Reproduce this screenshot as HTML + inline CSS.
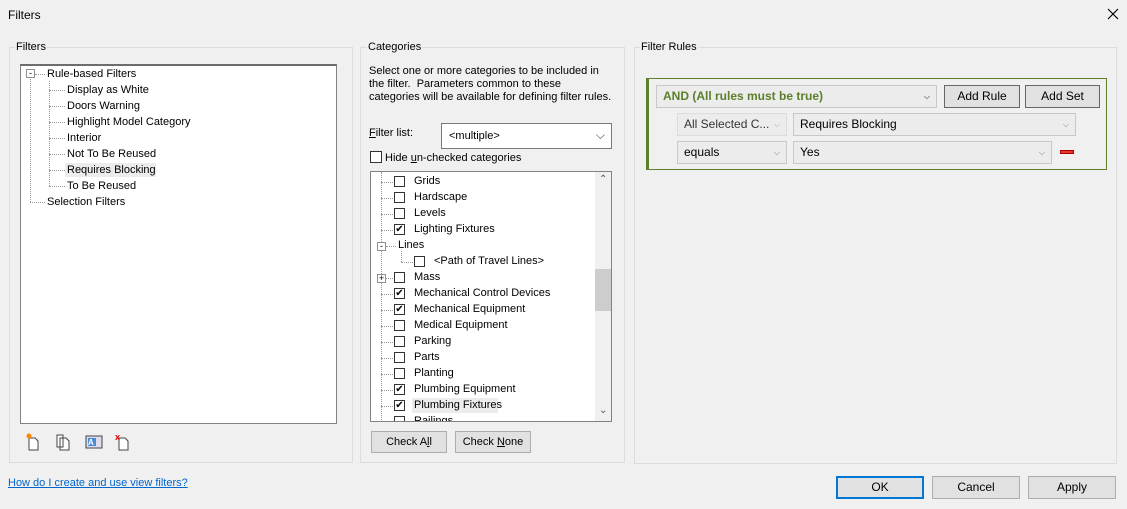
<!DOCTYPE html>
<html><head><style>
*{box-sizing:border-box;margin:0;padding:0}
body{width:1127px;height:509px;background:#f0f0f0;font-family:"Liberation Sans",sans-serif;font-size:11px;color:#000;position:relative;overflow:hidden}
.a{position:absolute;white-space:nowrap}
.grp{position:absolute;border:1px solid #dcdcdc}
.lg{position:absolute;background:#f0f0f0;padding:0 1px}
.btn{position:absolute;background:#e1e1e1;border:1px solid #adadad;text-align:center}
.cb{position:absolute;width:11px;height:11px;border:1px solid #333;background:#fff;font-size:10px;line-height:9px;text-align:center}
.dotv{position:absolute;border-left:1px dotted #999}
.doth{position:absolute;border-top:1px dotted #999}
.combo{position:absolute;border:1px solid #c8c8c8;background:#ececec;padding-left:6px}
.car{position:absolute;right:6px;top:0;color:#777;font-size:8px}
</style></head><body>
<div class="a" style="left:8px;top:8px;font-size:12px">Filters</div>
<svg class="a" style="left:1107px;top:8px" width="12" height="12"><path d="M1 1L11 11M11 1L1 11" stroke="#000" stroke-width="1.2"/></svg>

<!-- Filters group -->
<div class="grp" style="left:9px;top:47px;width:344px;height:416px"></div>
<div class="lg" style="left:15px;top:41px">Filters</div>
<div class="a" style="left:20px;top:64px;width:317px;height:360px;background:#fff;border:1px solid #828282;border-top:2px solid #6d6d6d"></div>
<div class="a" style="left:26px;top:69px;width:9px;height:9px;border:1px solid #919191;background:#fff;font-size:9px;line-height:6px;text-align:center">-</div>
<div class="doth" style="left:35px;top:74px;width:10px"></div>
<div class="dotv" style="left:30px;top:79px;height:123px"></div>
<div class="doth" style="left:30px;top:202px;width:15px"></div>
<div class="dotv" style="left:49px;top:81px;height:105px"></div>
<div class="a" style="left:47px;top:68px">Rule-based Filters</div>
<div class="a" style="left:47px;top:196px">Selection Filters</div>
<div class="a" style="left:65px;top:163px;width:91px;height:14px;background:#ececec"></div>
<div style="position:absolute;left:49px;top:84px">
<div class="doth" style="left:0;top:6px;width:16px"></div><div class="a" style="left:18px;top:0">Display as White</div>
<div class="doth" style="left:0;top:22px;width:16px"></div><div class="a" style="left:18px;top:16px">Doors Warning</div>
<div class="doth" style="left:0;top:38px;width:16px"></div><div class="a" style="left:18px;top:32px">Highlight Model Category</div>
<div class="doth" style="left:0;top:54px;width:16px"></div><div class="a" style="left:18px;top:48px">Interior</div>
<div class="doth" style="left:0;top:70px;width:16px"></div><div class="a" style="left:18px;top:64px">Not To Be Reused</div>
<div class="doth" style="left:0;top:86px;width:16px"></div><div class="a" style="left:18px;top:80px">Requires Blocking</div>
<div class="doth" style="left:0;top:102px;width:16px"></div><div class="a" style="left:18px;top:96px">To Be Reused</div>
</div>
<svg class="a" style="left:25px;top:432px" width="120" height="20">
<path d="M4 6h6l3 3v9H4z" fill="#fff" stroke="#444"/><circle cx="4" cy="4" r="2.5" fill="#f80"/>
<path d="M32 3h6v12h-6z M35 6h6l3 3v9h-9z" fill="#fff" stroke="#444"/>
<rect x="61" y="4" width="16" height="12" fill="#dde" stroke="#444"/><rect x="63" y="6" width="8" height="8" fill="#4a8ad4"/><text x="63" y="13" font-size="8" fill="#fff" font-family="Liberation Sans" font-weight="bold">A</text>
<path d="M94 6h6l3 3v9h-9z" fill="#fff" stroke="#444"/><text x="90" y="8" font-size="9" fill="#d00" font-weight="bold" font-family="Liberation Sans">x</text>
</svg>
<a class="a" style="left:8px;top:477px;color:#0066cc;text-decoration:underline">How do I create and use view filters?</a>

<!-- Categories -->
<div class="grp" style="left:360px;top:47px;width:265px;height:416px"></div>
<div class="lg" style="left:367px;top:41px">Categories</div>
<div class="a" style="left:369px;top:65px;line-height:13px">Select one or more categories to be included in<br>the filter.&nbsp; Parameters common to these<br>categories will be available for defining filter rules.</div>
<div class="a" style="left:369px;top:127px"><u>F</u>ilter list:</div>
<div class="a" style="left:441px;top:123px;width:171px;height:26px;background:#fff;border:1px solid #7a7a7a;padding:6px 0 0 7px">&lt;multiple&gt;<span style="position:absolute;right:6px;top:4px;font-size:12px;color:#444">⌵</span></div>
<div class="cb" style="left:370px;top:151px;width:12px;height:12px"></div>
<div class="a" style="left:385px;top:152px">Hide <u>u</u>n-checked categories</div>
<div class="a" style="left:370px;top:171px;width:242px;height:251px;background:#fff;border:1px solid #828282;overflow:hidden">
<div class="a" style="left:224px;top:0;width:17px;height:250px;background:#f0f0f0"></div>
<div class="a" style="left:228px;top:2px;color:#555;font-size:10px">⌃</div>
<div class="a" style="left:228px;top:233px;color:#555;font-size:10px">⌄</div>
<div class="a" style="left:224px;top:97px;width:17px;height:42px;background:#cdcdcd"></div>
<div class="dotv" style="left:10px;top:0;height:250px"></div>
<div style="position:absolute;left:0;top:3px">
<div class="doth" style="left:10px;top:7px;width:12px"></div><div class="cb" style="left:23px;top:1px"></div><div class="a" style="left:43px;top:0">Grids</div>
<div class="doth" style="left:10px;top:23px;width:12px"></div><div class="cb" style="left:23px;top:17px"></div><div class="a" style="left:43px;top:16px">Hardscape</div>
<div class="doth" style="left:10px;top:39px;width:12px"></div><div class="cb" style="left:23px;top:33px"></div><div class="a" style="left:43px;top:32px">Levels</div>
<div class="doth" style="left:10px;top:55px;width:12px"></div><div class="cb" style="left:23px;top:49px">✔</div><div class="a" style="left:43px;top:48px">Lighting Fixtures</div>
<div class="a" style="left:6px;top:67px;width:9px;height:9px;border:1px solid #919191;background:#fff;font-size:9px;line-height:6px;text-align:center">-</div>
<div class="doth" style="left:15px;top:71px;width:10px"></div><div class="a" style="left:27px;top:64px">Lines</div>
<div class="dotv" style="left:30px;top:76px;height:11px"></div><div class="doth" style="left:30px;top:87px;width:12px"></div><div class="cb" style="left:43px;top:81px"></div><div class="a" style="left:63px;top:80px">&lt;Path of Travel Lines&gt;</div>
<div class="a" style="left:6px;top:99px;width:9px;height:9px;border:1px solid #919191;background:#fff;font-size:9px;line-height:7px;text-align:center">+</div>
<div class="doth" style="left:15px;top:103px;width:7px"></div><div class="cb" style="left:23px;top:97px"></div><div class="a" style="left:43px;top:96px">Mass</div>
<div class="doth" style="left:10px;top:119px;width:12px"></div><div class="cb" style="left:23px;top:113px">✔</div><div class="a" style="left:43px;top:112px">Mechanical Control Devices</div>
<div class="doth" style="left:10px;top:135px;width:12px"></div><div class="cb" style="left:23px;top:129px">✔</div><div class="a" style="left:43px;top:128px">Mechanical Equipment</div>
<div class="doth" style="left:10px;top:151px;width:12px"></div><div class="cb" style="left:23px;top:145px"></div><div class="a" style="left:43px;top:144px">Medical Equipment</div>
<div class="doth" style="left:10px;top:167px;width:12px"></div><div class="cb" style="left:23px;top:161px"></div><div class="a" style="left:43px;top:160px">Parking</div>
<div class="doth" style="left:10px;top:183px;width:12px"></div><div class="cb" style="left:23px;top:177px"></div><div class="a" style="left:43px;top:176px">Parts</div>
<div class="doth" style="left:10px;top:199px;width:12px"></div><div class="cb" style="left:23px;top:193px"></div><div class="a" style="left:43px;top:192px">Planting</div>
<div class="doth" style="left:10px;top:215px;width:12px"></div><div class="cb" style="left:23px;top:209px">✔</div><div class="a" style="left:43px;top:208px">Plumbing Equipment</div>
<div class="a" style="left:41px;top:223px;width:86px;height:15px;background:#ececec"></div>
<div class="doth" style="left:10px;top:231px;width:12px"></div><div class="cb" style="left:23px;top:225px">✔</div><div class="a" style="left:43px;top:224px">Plumbing Fixtures</div>
<div class="cb" style="left:23px;top:241px"></div><div class="a" style="left:43px;top:240px">Railings</div>
</div>
</div>
<div class="btn" style="left:371px;top:431px;width:76px;height:22px;line-height:20px">Check A<u>l</u>l</div>
<div class="btn" style="left:455px;top:431px;width:76px;height:22px;line-height:20px">Check <u>N</u>one</div>

<!-- Filter rules -->
<div class="grp" style="left:634px;top:47px;width:483px;height:417px"></div>
<div class="lg" style="left:640px;top:41px">Filter Rules</div>
<div class="a" style="left:646px;top:78px;width:461px;height:92px;border:1px solid #5b7f2a;border-left:3px solid #5b7f2a"></div>
<div class="combo" style="left:656px;top:85px;width:281px;height:23px;line-height:21px;color:#5b7f2a;font-weight:bold;font-size:12px">AND (All rules must be true)<span class="car" style="top:0">⌵</span></div>
<div class="btn" style="left:944px;top:85px;width:76px;height:23px;line-height:21px;font-size:12px;border-color:#666">Add Rule</div>
<div class="btn" style="left:1025px;top:85px;width:75px;height:23px;line-height:21px;font-size:12px;border-color:#666">Add Set</div>
<div class="combo" style="left:677px;top:113px;width:110px;height:23px;line-height:21px;border-color:#dcdcdc;font-size:12px;color:#333">All Selected C...<span class="car" style="color:#aaa">⌵</span></div>
<div class="combo" style="left:793px;top:113px;width:283px;height:23px;line-height:21px;font-size:12px">Requires Blocking<span class="car">⌵</span></div>
<div class="combo" style="left:677px;top:141px;width:110px;height:23px;line-height:21px;font-size:12px">equals<span class="car">⌵</span></div>
<div class="combo" style="left:793px;top:141px;width:259px;height:23px;line-height:21px;font-size:12px">Yes<span class="car">⌵</span></div>
<div class="a" style="left:1060px;top:150px;width:14px;height:4px;background:#e33;border:1px solid #a00"></div>

<div class="btn" style="left:836px;top:476px;width:88px;height:23px;line-height:21px;border:1px solid #0078d7;box-shadow:inset 0 0 0 1px #0078d7;font-size:12px">OK</div>
<div class="btn" style="left:932px;top:476px;width:88px;height:23px;line-height:21px;font-size:12px">Cancel</div>
<div class="btn" style="left:1028px;top:476px;width:88px;height:23px;line-height:21px;font-size:12px">Apply</div>
</body></html>
